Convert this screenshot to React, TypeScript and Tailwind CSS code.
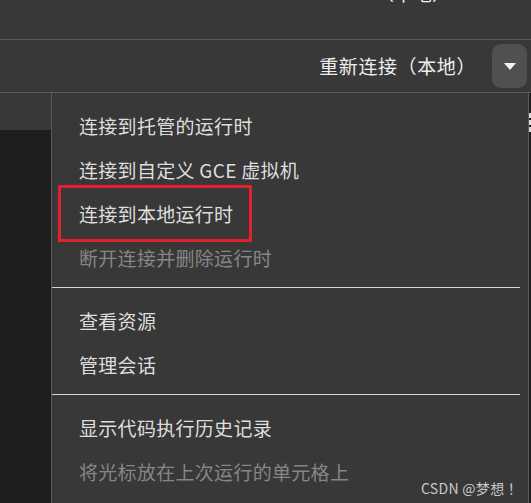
import React from 'react';

type MenuItem = { label: string; disabled?: boolean };

const groups: MenuItem[][] = [
  [
    { label: '连接到托管的运行时' },
    { label: '连接到自定义 GCE 虚拟机' },
    { label: '连接到本地运行时' },
    { label: '断开连接并删除运行时', disabled: true },
  ],
  [{ label: '查看资源' }, { label: '管理会话' }],
  [
    { label: '显示代码执行历史记录' },
    { label: '将光标放在上次运行的单元格上', disabled: true },
  ],
];

const font = { fontFamily: '"Noto Sans CJK SC", "Noto Sans", sans-serif' };

export default function App() {
  return (
    <div className="relative w-[531px] h-[503px] overflow-hidden bg-[#1e1e1e]" style={font}>
      {/* Top toolbar (cut off) */}
      <div className="h-[40px] bg-[#383838] border-b border-[#5a5a5a] flex justify-end pr-[80px] overflow-hidden">
        <span className="-mt-[22px] text-[19px] text-[#f0f0f0] leading-[30px]">（本地）</span>
      </div>

      {/* Connect bar */}
      <div className="h-[53px] bg-[#383838] border-b border-[#5a5a5a] flex items-center justify-end pr-[4px]">
        <span className="text-[19px] text-[#eeeeee] tracking-[0.6px]">重新连接（本地）</span>
        <button className="ml-[16px] w-[35px] h-[44px] rounded-[9px] bg-[#505050] flex items-center justify-center">
          <svg width="12" height="7" viewBox="0 0 12 7">
            <path d="M0 0 L12 0 L6 7 Z" fill="#f2f2f2" />
          </svg>
        </button>
      </div>

      {/* Left toolbar row */}
      <div className="h-[37px] w-[51px] bg-[#383838]" />

      {/* Right-side sliver */}
      <div className="absolute left-[528px] top-[113px] w-[3px] flex flex-col gap-[2px]">
        <div className="h-[5px] bg-[#d8d8d8]" />
        <div className="h-[5px] bg-[#d8d8d8]" />
        <div className="h-[5px] bg-[#d8d8d8]" />
      </div>

      {/* Dropdown menu */}
      <div className="absolute left-[51px] top-[92px] w-[478px] h-[430px] bg-[#383838] border border-[#5a5a5a]">
        {groups.map((group, gi) => (
          <div key={gi}>
            {gi > 0 && <div className="h-px bg-[#d6d6d6] mr-[8px]" />}
            <div className="pt-[11px] pb-[7px]">
              {group.map((item) => (
                <div
                  key={item.label}
                  className={`h-[44px] flex items-center pl-[27px] text-[19px] tracking-[0.3px] ${
                    item.disabled ? 'text-[#868686]' : 'text-[#dedede]'
                  }`}
                >
                  {item.label}
                </div>
              ))}
            </div>
          </div>
        ))}
      </div>

      {/* Red highlight box */}
      <div className="absolute left-[58px] top-[185px] w-[194px] h-[57px] border-[3px] border-[#e3202b]" />

      {/* Watermark */}
      <div className="absolute left-[421px] top-[478px] text-[14px] text-[#c9c9c9] leading-[20px] tracking-[0.3px]">
        CSDN @梦想 ！
      </div>
    </div>
  );
}
